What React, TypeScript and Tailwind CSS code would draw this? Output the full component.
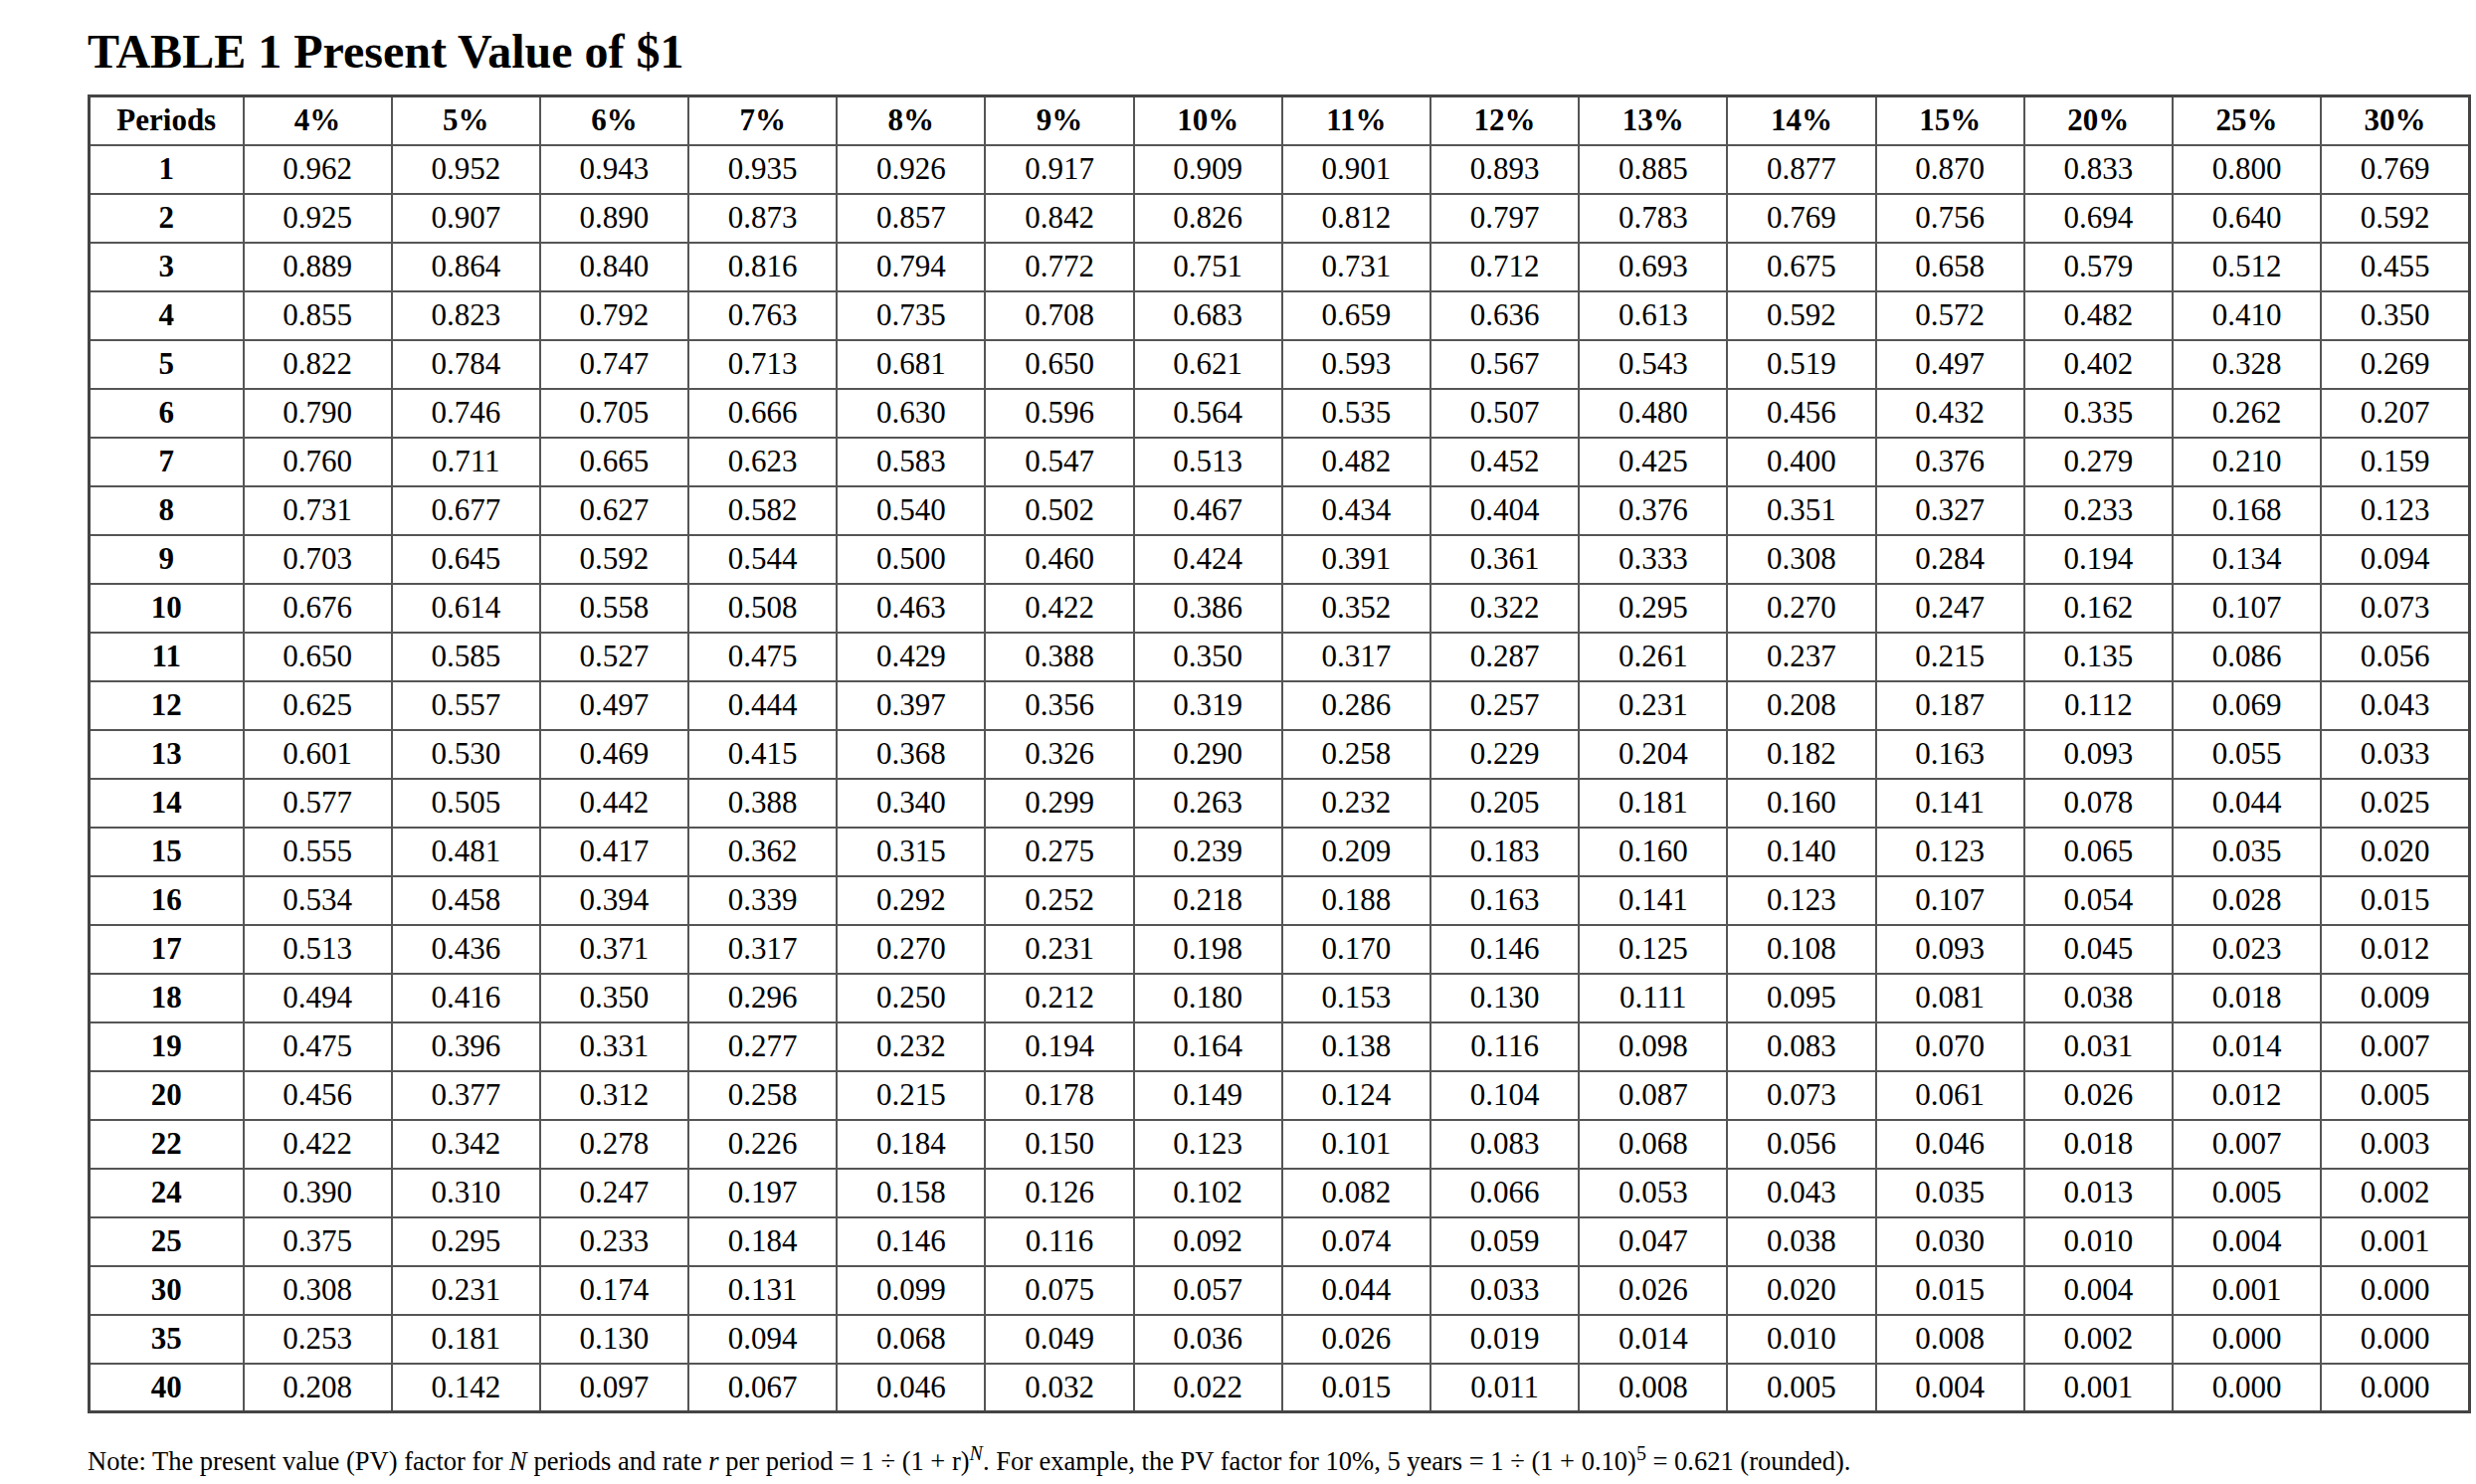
const rates = ["4%", "5%", "6%", "7%", "8%", "9%", "10%", "11%", "12%", "13%", "14%", "15%", "20%", "25%", "30%"];

// period followed by the 15 factors, one line per row
const raw = `1 0.962 0.952 0.943 0.935 0.926 0.917 0.909 0.901 0.893 0.885 0.877 0.870 0.833 0.800 0.769
2 0.925 0.907 0.890 0.873 0.857 0.842 0.826 0.812 0.797 0.783 0.769 0.756 0.694 0.640 0.592
3 0.889 0.864 0.840 0.816 0.794 0.772 0.751 0.731 0.712 0.693 0.675 0.658 0.579 0.512 0.455
4 0.855 0.823 0.792 0.763 0.735 0.708 0.683 0.659 0.636 0.613 0.592 0.572 0.482 0.410 0.350
5 0.822 0.784 0.747 0.713 0.681 0.650 0.621 0.593 0.567 0.543 0.519 0.497 0.402 0.328 0.269
6 0.790 0.746 0.705 0.666 0.630 0.596 0.564 0.535 0.507 0.480 0.456 0.432 0.335 0.262 0.207
7 0.760 0.711 0.665 0.623 0.583 0.547 0.513 0.482 0.452 0.425 0.400 0.376 0.279 0.210 0.159
8 0.731 0.677 0.627 0.582 0.540 0.502 0.467 0.434 0.404 0.376 0.351 0.327 0.233 0.168 0.123
9 0.703 0.645 0.592 0.544 0.500 0.460 0.424 0.391 0.361 0.333 0.308 0.284 0.194 0.134 0.094
10 0.676 0.614 0.558 0.508 0.463 0.422 0.386 0.352 0.322 0.295 0.270 0.247 0.162 0.107 0.073
11 0.650 0.585 0.527 0.475 0.429 0.388 0.350 0.317 0.287 0.261 0.237 0.215 0.135 0.086 0.056
12 0.625 0.557 0.497 0.444 0.397 0.356 0.319 0.286 0.257 0.231 0.208 0.187 0.112 0.069 0.043
13 0.601 0.530 0.469 0.415 0.368 0.326 0.290 0.258 0.229 0.204 0.182 0.163 0.093 0.055 0.033
14 0.577 0.505 0.442 0.388 0.340 0.299 0.263 0.232 0.205 0.181 0.160 0.141 0.078 0.044 0.025
15 0.555 0.481 0.417 0.362 0.315 0.275 0.239 0.209 0.183 0.160 0.140 0.123 0.065 0.035 0.020
16 0.534 0.458 0.394 0.339 0.292 0.252 0.218 0.188 0.163 0.141 0.123 0.107 0.054 0.028 0.015
17 0.513 0.436 0.371 0.317 0.270 0.231 0.198 0.170 0.146 0.125 0.108 0.093 0.045 0.023 0.012
18 0.494 0.416 0.350 0.296 0.250 0.212 0.180 0.153 0.130 0.111 0.095 0.081 0.038 0.018 0.009
19 0.475 0.396 0.331 0.277 0.232 0.194 0.164 0.138 0.116 0.098 0.083 0.070 0.031 0.014 0.007
20 0.456 0.377 0.312 0.258 0.215 0.178 0.149 0.124 0.104 0.087 0.073 0.061 0.026 0.012 0.005
22 0.422 0.342 0.278 0.226 0.184 0.150 0.123 0.101 0.083 0.068 0.056 0.046 0.018 0.007 0.003
24 0.390 0.310 0.247 0.197 0.158 0.126 0.102 0.082 0.066 0.053 0.043 0.035 0.013 0.005 0.002
25 0.375 0.295 0.233 0.184 0.146 0.116 0.092 0.074 0.059 0.047 0.038 0.030 0.010 0.004 0.001
30 0.308 0.231 0.174 0.131 0.099 0.075 0.057 0.044 0.033 0.026 0.020 0.015 0.004 0.001 0.000
35 0.253 0.181 0.130 0.094 0.068 0.049 0.036 0.026 0.019 0.014 0.010 0.008 0.002 0.000 0.000
40 0.208 0.142 0.097 0.067 0.046 0.032 0.022 0.015 0.011 0.008 0.005 0.004 0.001 0.000 0.000`;

const rows = raw.split("\n").map((line) => line.trim().split(" "));

export default function App() {
  return (
    <div className="min-h-screen bg-white px-[88px] text-black font-['Liberation_Serif','Times_New_Roman',serif]">
      <h1 className="pt-[24px] pb-[15px] text-[48px] leading-[56px] font-bold">
        TABLE 1 Present Value of $1
      </h1>

      <table className="w-[2396px] table-fixed border-collapse border-[3px] border-[#444]">
        <colgroup>
          <col className="w-[155px]" />
          {rates.map((r) => (
            <col key={r} />
          ))}
        </colgroup>
        <thead>
          <tr className="h-[49px]">
            <th className="border-2 border-[#555] text-[31px] font-bold text-center align-middle">Periods</th>
            {rates.map((r) => (
              <th key={r} className="border-2 border-[#555] text-[31px] font-bold text-center align-middle">
                {r}
              </th>
            ))}
          </tr>
        </thead>
        <tbody>
          {rows.map(([period, ...vals]) => (
            <tr key={period} className="h-[49px]">
              <td className="border-2 border-[#555] text-[31px] font-bold text-center align-middle">{period}</td>
              {vals.map((v, i) => (
                <td key={i} className="border-2 border-[#555] text-[31px] text-center align-middle">
                  {v}
                </td>
              ))}
            </tr>
          ))}
        </tbody>
      </table>

      <p className="mt-[32px] text-[26.5px] leading-[32px]">
        Note: The present value (PV) factor for <i>N</i> periods and rate <i>r</i> per period = 1 ÷ (1 + r)
        <sup className="text-[20px]">
          <i>N</i>
        </sup>
        . For example, the PV factor for 10%, 5 years = 1 ÷ (1 + 0.10)
        <sup className="text-[20px]">5</sup> = 0.621 (rounded).
      </p>
    </div>
  );
}
